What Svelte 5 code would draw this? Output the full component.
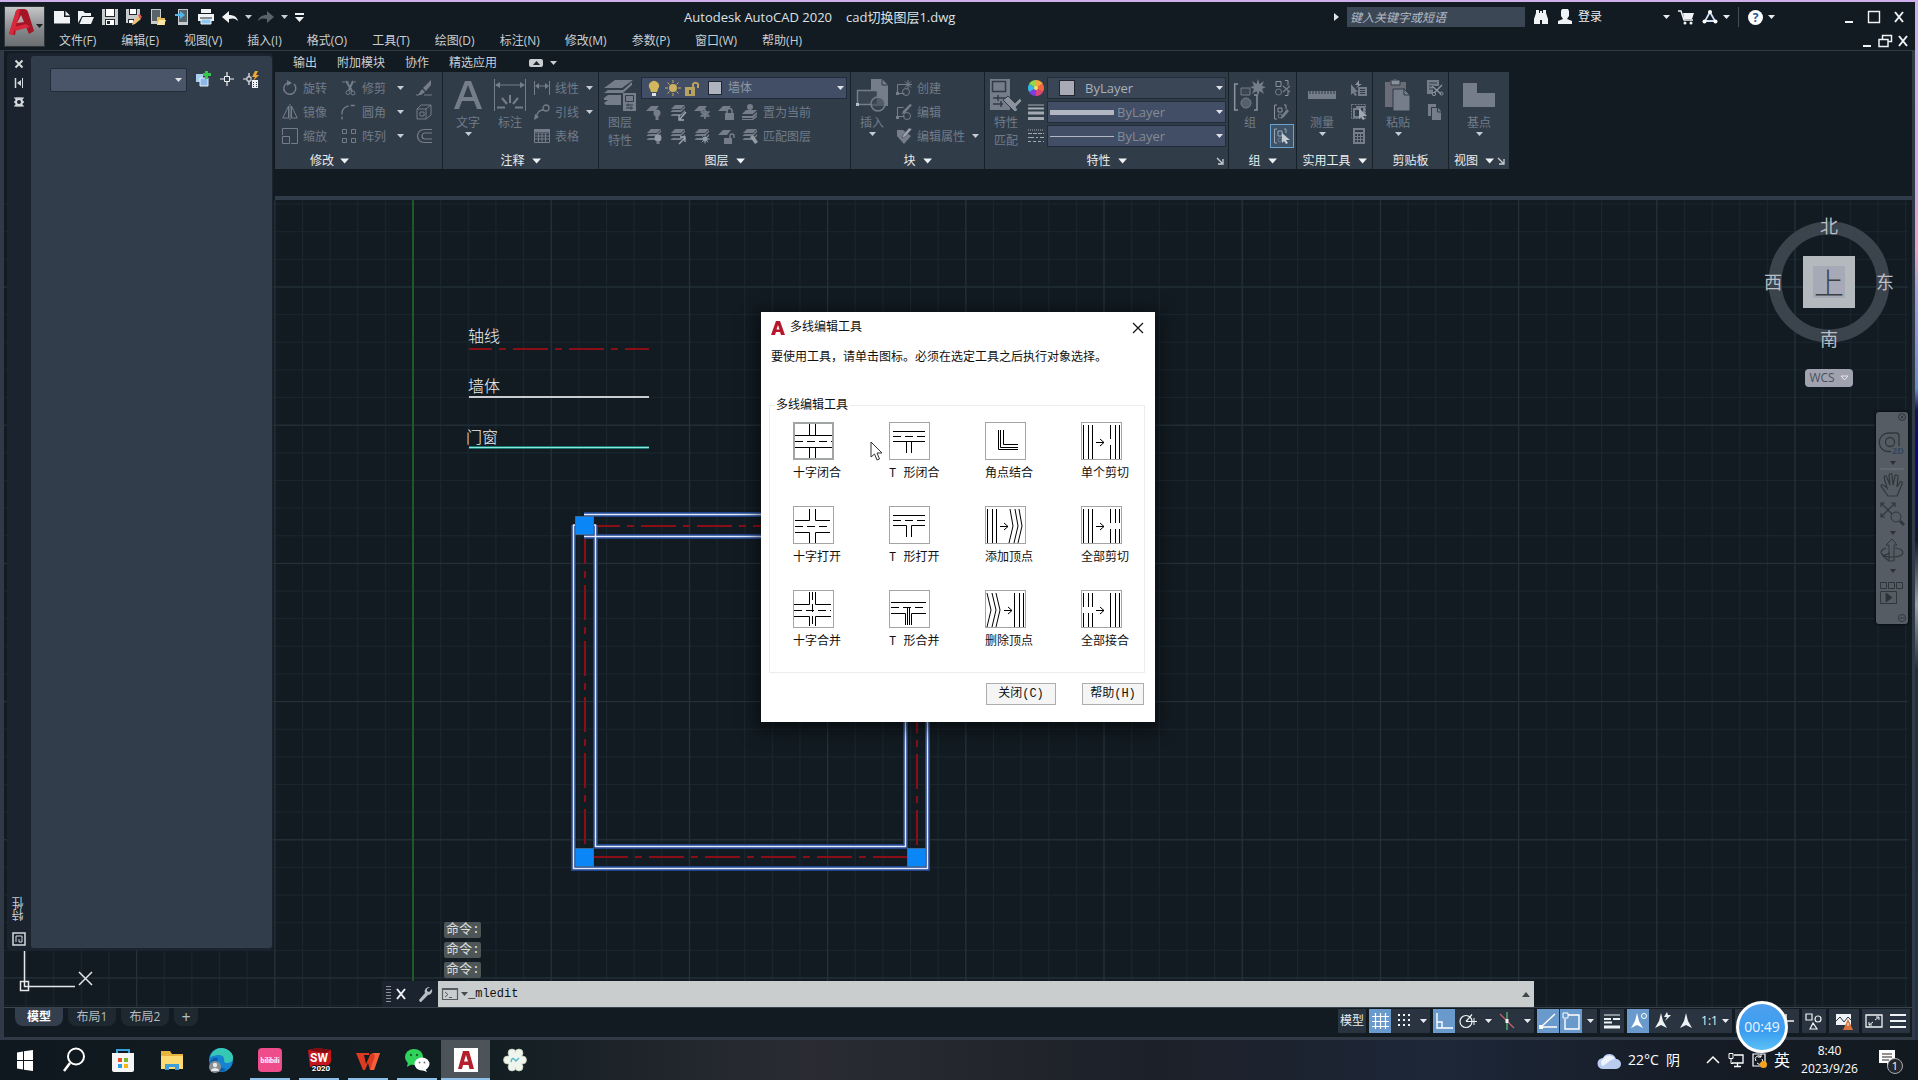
<script>
  const g = '#757d8a';
  const w = '#f0f3f5';
  const stackSmall = `<path d="M5 1h10l-4 4H1zM1 7l2-1h8l4-4v2l-4 4H1zM1 11l2-1h8l4-4v2l-4 4H1z" fill="${g}"/>`;
  const sheet = `<path d="M5 2h8l-4 5H0z" fill="${g}"/>`;
  const icons = {
    rotate: `<path d="M5 3a6 6 0 1 0 7 1" fill="none" stroke="${g}" stroke-width="1.4"/><path d="M5 0v6l5-3z" fill="${g}"/>`,
    trim: `<path d="M1 2h3M6 2h2M13 2h2" stroke="${g}"/><path d="M5 1l6 10M12 1L8 10" stroke="${g}" stroke-width="2"/><circle cx="7" cy="12.500" r="2" fill="none" stroke="${g}"/><circle cx="12" cy="13" r="2" fill="none" stroke="${g}"/>`,
    erase: `<path d="M15 0L7 8l3 3 5-6zM6 9l3 3-4 3H2z" fill="${g}"/><path d="M0 15h3M8 15h8" stroke="${g}"/>`,
    mirror: `<path d="M6.500 2v12H.8zM9.500 2v12h5.700z" fill="none" stroke="${g}"/><path d="M8 0v16" stroke="${g}"/>`,
    fillet: `<path d="M1 15.500v-6C1 5 5 1.500 10 1.500h5.500" fill="none" stroke="${g}" stroke-width="1.300" stroke-dasharray="3 2 12 2 4"/>`,
    box: `<path d="M1 5h9v10H1zM1 5l4-4h10v10l-5 4M10 5l5-4M4 8h4v4H4z" fill="none" stroke="${g}"/>`,
    scale: `<path d="M.5 7V.5h15v15H9M.5 8.500h7v7h-7z" fill="none" stroke="${g}"/>`,
    array: `<path d="M1.500 1.500h4v4h-4zM10.500 1.500h4v4h-4zM1.500 10.500h4v4h-4zM10.500 10.500h4v4h-4z" fill="none" stroke="${g}"/>`,
    offset: `<path d="M16 1.500H8a6 6 0 0 0 0 13h8M16 5H9a3 3 0 0 0 0 6h7" fill="none" stroke="${g}" stroke-width="1.2"/>`,
    linear: `<path d="M.5 1v14M15.500 1v14M2 6h12" stroke="${g}"/><path d="M1 6l4-3v6zM15 6l-4-3v6z" fill="${g}"/>`,
    leader: `<path d="M2 14C3 8 5 6 9 6" fill="none" stroke="${g}" stroke-width="1.3"/><path d="M0 16l1-6 4 3z" fill="${g}"/><circle cx="12" cy="4" r="3" fill="none" stroke="${g}" stroke-width="1.3"/>`,
    table: `<path d="M.5 1.500h15v13H.5zM.5 5h15M.5 8h15M.5 11h15M4.500 5v9M8 5v9M11.500 5v9" fill="none" stroke="${g}"/><path d="M0 1h16v3H0z" fill="${g}"/>`,
    bigA: `<path d="M2 30L13 2h6l11 28h-5l-3-8H10l-3 8zM11.500 18h9L16 6z" fill="${g}" fill-rule="evenodd"/>`,
    bigDim: `<path d="M.5 0v32M31.500 0v32M2 6h28" stroke="${g}"/><path d="M1 6l5-3v6zM31 6l-5-3v6z" fill="${g}"/><path d="M16 16v8M8 19l5 6M24 19l-5 6M3 28.500h8M29 28.500h-8" stroke="${g}" stroke-width="2"/>`,
    bigLayers: `<path d="M11 1h18L18 9H0zM0 14l4-3h15l9-8v3l-9 8zM0 19l4-3h13v5H0zM0 24l4-3h13v5H2z" fill="${g}"/><path d="M19 14h13v18H19z" fill="${g}"/><path d="M21.500 16.500h8v6h-8zM22 26h7M22 29h7M24 24.500v3M27 27.500v3" fill="none" stroke="#313b49"/>`,
    layOff: sheet + `<circle cx="11" cy="9" r="3.500" fill="${g}"/><path d="M9.500 12h3v4h-3z" fill="${g}"/>`,
    layIso: stackSmall + `<path d="M16 8l-6 7M9 11v5h5" fill="none" stroke="#a3aab5" stroke-width="1.3"/>`,
    layFreeze: sheet + `<path d="M11 5v10M6.500 7.500l9 5M15.500 7.500l-9 5" stroke="${g}" stroke-width="1.6"/><circle cx="11" cy="10" r="3" fill="none" stroke="${g}"/>`,
    layLock: sheet + `<path d="M7 9h9v7H7z" fill="${g}"/><path d="M9 9V7a2.500 2.500 0 0 1 5 0v2" fill="none" stroke="${g}" stroke-width="1.5"/>`,
    layCur: `<circle cx="8" cy="3" r="3" fill="${g}"/><path d="M4 6h11l-4 4H0zM0 12h10l5-4v2l-4 4H0z M0 16v-1h10l5-4v2l-4 3z" fill="${g}"/>`,
    layOn: stackSmall + `<circle cx="12" cy="10" r="3.500" fill="#929aa5"/><path d="M10.500 13h3v3h-3z" fill="${g}"/>`,
    layUniso: stackSmall + `<path d="M9 16l6-6M10 9h5v5" fill="none" stroke="#a3aab5" stroke-width="1.3"/>`,
    layThaw: stackSmall + `<circle cx="11" cy="11" r="2.500" fill="#929aa5"/><path d="M11 6v10M6 11h10M7.500 7.500l7 7M14.500 7.500l-7 7" stroke="#929aa5" stroke-dasharray="1.500 5 3"/>`,
    layUnlock: sheet + `<path d="M6 10h8v6H6z" fill="${g}"/><path d="M12 10V8a2 2 0 0 1 4 0v2" fill="none" stroke="${g}" stroke-width="1.5"/>`,
    layMatch: stackSmall + `<path d="M8 9l3-2 5 7-3 2z" fill="#929aa5"/>`,
    bulb: `<path d="M4 9a5 5 0 1 1 8 0l-1 3H5z" fill="#d3b75c"/><path d="M6 13h4v3H6z" fill="#dfe1e4"/>`,
    sun: `<circle cx="8" cy="8" r="4" fill="#cbb064"/><path d="M8 0v3M8 13v3M0 8h3M13 8h3M2.500 2.500l2 2M11.500 11.500l2 2M13.500 2.500l-2 2M4.500 11.500l-2 2" stroke="#cbb064"/>`,
    unlock: `<path d="M1 7h10v9H1z" fill="#b9a25f"/><path d="M9 7V4a3 3 0 0 1 5 0v4" fill="none" stroke="#b9a25f" stroke-width="2"/><path d="M5 10h2v4H5z" fill="#3f4c63"/>`,
    bigInsert: `<path d="M15 0h11l6 6v21H15z" fill="${g}"/><path d="M26 0v6h6" fill="none" stroke="#313b49"/><path d="M1.500 11.500h20v14h-20z" fill="#3a4552" stroke="${g}" stroke-width="1.500"/><circle cx="22" cy="25" r="7" fill="#3a4552" fill-opacity=".6" stroke="${g}" stroke-width="1.500"/><path d="M0 24h3v3H0z" fill="#b9bec6"/>`,
    create: `<path d="M1.500 4.500h7M1.500 4.500v9h7" fill="none" stroke="${g}"/><circle cx="10" cy="12" r="3.500" fill="none" stroke="${g}"/><path d="M12 0v9M8 4.500h8M9 1.500l6 6M15 1.500l-6 6" stroke="${g}"/><path d="M0 12h3v3H0z" fill="${g}"/>`,
    edit: `<path d="M1.500 3.500h6M1.500 3.500v9h7" fill="none" stroke="${g}"/><circle cx="11" cy="12" r="3.500" fill="none" stroke="${g}"/><path d="M16 1l-7 8-3 1 1-3 7-7z" fill="${g}"/><path d="M0 12h3v3H0z" fill="${g}"/>`,
    editAttr: `<path d="M1 2h6l8 6-7 8-7-8z" fill="${g}"/><path d="M16 1l-7 8-3 1 1-3 6-7z" fill="#a1a7b0" stroke="#313b49" stroke-width=".5"/>`,
    bigMatch: `<path d="M0 0h20v31H0z" fill="${g}"/><path d="M2.500 2.500h13v10h-13z" fill="none" stroke="#313b49" stroke-width="1.500"/><path d="M3 19h13M3 25h10M8 16v6M11 22v6" stroke="#313b49" stroke-width="1.500"/><path d="M13 21l5-4 7 7 5-5 2 3-6 6 2 3-3 2z" fill="#8b929c" stroke="#313b49"/>`,
    wheel: `<path d="M8 8V0a8 8 0 0 1 6.900 4z" fill="#f7a23b"/><path d="M8 8l6.900-4a8 8 0 0 1 0 8z" fill="#f2653f"/><path d="M8 8l6.900 4A8 8 0 0 1 8 16z" fill="#e0457b"/><path d="M8 8v8a8 8 0 0 1-6.900-4z" fill="#7b3fe0"/><path d="M8 8l-6.900 4a8 8 0 0 1 0-8z" fill="#38b6e8"/><path d="M8 8L1.100 4A8 8 0 0 1 8 0z" fill="#8fd94f"/><circle cx="8" cy="8" r="2" fill="#f6e06a"/>`,
    weights: `<path d="M0 1h16" stroke="#a3aab3"/><path d="M0 4.500h16" stroke="#a3aab3" stroke-width="2"/><path d="M0 9h16" stroke="#a3aab3" stroke-width="3"/><path d="M0 14.500h16" stroke="#a3aab3" stroke-width="3"/>`,
    types: `<path d="M0 2h16" stroke="#a3aab3" stroke-dasharray="1 1"/><path d="M0 5.500h16" stroke="#a3aab3" stroke-dasharray="4 1"/><path d="M0 9.500h16" stroke="#a3aab3" stroke-dasharray="6 2 2 2"/><path d="M0 13.500h16" stroke="#a3aab3" stroke-dasharray="3 2"/>`,
    bigGroup: `<path d="M4 5H.7v26H4M20 16h3v15h-3" fill="none" stroke="#8b929c" stroke-width="1.500"/><path d="M7 9h9v7H7z" fill="#3a4552" stroke="${g}"/><circle cx="12" cy="24" r="5" fill="#56606d" stroke="${g}"/><path d="M24 0l1.500 5L30 2l-2 5 4 1-4 2 2 5-4.500-3L24 17l-1.500-5L18 15l2-5-4-2 4-1-2-5 4.500 3z" fill="${g}"/>`,
    ungroup: `<path d="M2 1.500h5v5H2zM11 .5h3v5M14 11v4.500h-3" fill="none" stroke="#8b929c"/><circle cx="4.500" cy="12" r="3" fill="none" stroke="${g}"/><path d="M9 6l7 6M16 6l-7 6" stroke="${g}" stroke-width="1.300"/>`,
    groupEdit: `<path d="M3 1H.5v14H3M10 1h2v4M4 4h4v4H4z" fill="none" stroke="#8b929c"/><circle cx="6" cy="12" r="2" fill="none" stroke="${g}"/><path d="M15 7l-5 6-3 2 1-4 5-6z" fill="${g}"/>`,
    groupSel: `<path d="M3 1H.5v14H3M10 1h2v4M4 3h4v5H4z" fill="none" stroke="#9aa7b4"/><circle cx="6" cy="12" r="2" fill="none" stroke="${g}"/><path d="M8 5v10l2-2 2 3 2-1-2-3h4z" fill="#c3cbd3"/>`,
    bigRuler: `<path d="M2 12h28v8H2z" fill="${g}"/><path d="M4 12v3M7 12v3M10 12v3M13 12v3M16 12v3M19 12v3M22 12v3M25 12v3M28 12v3" stroke="#313b49"/>`,
    quickSel: `<path d="M0 4v11l2-2 2 3 2-1-2-3h3z" fill="${g}"/><path d="M7 7h9v9H7z" fill="${g}"/><path d="M9 9.500h5M9 11.500h5M9 13.500h5" stroke="#313b49"/><path d="M8 0L4 5h3l-2 3 6-4H8z" fill="#8b929c"/>`,
    selAll: `<path d="M.5.5h14v14H.5z" fill="none" stroke="${g}" stroke-dasharray="2 1"/><path d="M3 5h6v8H3z M5 3h8v7" fill="none" stroke="${g}" stroke-width="2"/><path d="M8 4v11l2-2 2 3 2-1-2-3h4z" fill="#a1a7b0"/>`,
    calc: `<path d="M2 0h12v16H2z" fill="${g}"/><path d="M4 2h8v2H4zM4 6h2v2H4zM7 6h2v2H7zM10 6h2v2h-2zM4 9h2v2H4zM7 9h2v2H7zM10 9h2v2h-2zM4 12h2v2H4zM7 12h2v2H7zM10 12h2v2h-2z" fill="#313b49"/>`,
    bigPaste: `<path d="M3 3h5V1h3V0h4v1h3v2h6v25H3z" fill="#6a6d75"/><path d="M9 1h9v5H9z" fill="#8b929c" stroke="#313b49"/><path d="M11 10h11l6 6v16H11z" fill="${g}" stroke="#313b49"/><path d="M22 9v7h7" fill="none" stroke="#313b49"/>`,
    cut: `<path d="M0 0h12v6H6v8H0z" fill="${g}"/><path d="M2 3h8M2 6h5M2 9h4" stroke="#313b49"/><path d="M5 6l9 8M15 5l-8 8" stroke="#8b929c" stroke-width="1.500"/><circle cx="7" cy="14" r="1.700" fill="none" stroke="#8b929c"/><circle cx="14.500" cy="13.500" r="1.500" fill="none" stroke="#8b929c"/>`,
    copy: `<path d="M1 0h8v3H4v9H1z" fill="${g}"/><path d="M5 4h6l3 3v9H5z" fill="${g}"/><path d="M10.500 4v4H14" fill="none" stroke="#313b49"/>`,
    bigBase: `<path d="M0 4h14v10h18v14H0z" fill="${g}"/>`,
    newFile: `<path d="M0 2h10v6h6v6.500H0z" fill="${w}"/><path d="M11.500 2v4.500H16z" fill="${w}"/>`,
    open: `<path d="M0 14V2h5l2 2h6v3H4z" fill="${w}"/><path d="M4.500 8H16l-3 7H1.500z" fill="${w}"/>`,
    save: `<path d="M0 0h16v16H0z" fill="#c8cccd"/><path d="M3 0h10v8H3z" fill="#20272d"/><path d="M4 0h8v7H4z" fill="#fff"/><path d="M3 10h10v6H3z" fill="#20272d"/><path d="M4 11h8v5H4z" fill="#fff"/><path d="M5 12h3v3H5z" fill="#20272d"/>`,
    saveAs: `<path d="M0 0h14v8l-6 6H0z" fill="#c8cccd"/><path d="M3 0h8v6H3z" fill="#20272d"/><path d="M4 0h6v5H4z" fill="#fff"/><path d="M2 10h6v5H2z" fill="#20272d"/><path d="M3 11h4v3H3z" fill="#fff"/><path d="M12 7l3 3-6 5-3 1 1-4z" fill="#efc07a"/><path d="M12 6l2-1 2 3-2 2z" fill="#e05a50"/>`,
    cloudOpen: `<path d="M1 0h10v15H1z" fill="#c8cccd"/><path d="M2 1h8v11H2z" fill="#59636b"/><path d="M7 8h3l1 1h4v7H7z" fill="#e8bd55"/><path d="M9 11h7l-2 5H7z" fill="#fbe6a5"/>`,
    cloudSave: `<path d="M4 0h10v16H4z" fill="#c8cccd"/><path d="M5 1h8v12H5z" fill="#59636b"/><path d="M1 5h5V2l5 4-5 4V7H1z" fill="#4fb6ee"/>`,
    print: `<path d="M3 0h10v4H3z" fill="${w}"/><path d="M0 5h16v7H0z" fill="${w}"/><path d="M3 10h10v5H3z" fill="#8cc8f2" stroke="${w}"/><path d="M2 9h12" stroke="#20272d"/>`,
    undo: `<path d="M0 8l7-6v4c5 0 8 2 9 6-3-3-5-3-9-2v4z" fill="${w}"/>`,
    redo: `<path d="M16 8L9 2v4c-5 0-8 2-9 6 3-3 5-3 9-2v4z" fill="#59636b"/>`,
    custom: `<path d="M1 2h9v2H1zM1 6h9l-4.500 5z" fill="${w}"/>`,
    binoc: `<path d="M3 1h3v3h1V2h2v2h1V1h3v3l2 6v5H9v-4H7v4H1v-5l2-6z" fill="${w}"/>`,
    user: `<path d="M5 0h6l1 2v5l-2 3 5 2v3H1v-3l5-2-2-3V2z" fill="${w}"/>`,
    cart: `<path d="M0 2h3l3 9h9" fill="none" stroke="${w}" stroke-width="1.500"/><path d="M5 4h11l-2 6H6z" fill="${w}"/><circle cx="7" cy="14" r="1.500" fill="${w}"/><circle cx="13" cy="14" r="1.500" fill="${w}"/>`,
    share: `<path d="M8 3L3 12h10z" fill="none" stroke="#cfe0f4" stroke-width="1.800"/><circle cx="8" cy="3" r="2" fill="#fff"/><circle cx="2.500" cy="12.500" r="2" fill="#fff"/><circle cx="13.500" cy="12.500" r="2" fill="#fff"/>`,
    min: `<path d="M4 12h8v2H4z" fill="${w}"/>`,
    max: `<path d="M2.500 2.500h11v11h-11z" fill="none" stroke="${w}" stroke-width="1.400"/>`,
    restore: `<path d="M5.500 6V2.500h9v6H11M2 6.500h9v7H2z" fill="none" stroke="${w}" stroke-width="1.500"/>`,
    close: `<path d="M4 3l8 10M12 3L4 13" stroke="${w}" stroke-width="2"/>`,
    railClose: `<path d="M4.500 4.500l7 7M11.500 4.500l-7 7" stroke="#d5dade" stroke-width="2"/>`,
    pin: `<path d="M4.500 3v10" stroke="#d5dade" stroke-width="1.500"/><path d="M10 5v6L6 8z" fill="#d5dade"/><path d="M11.500 3v10" stroke="#d5dade"/>`,
    cog: `<circle cx="8" cy="8" r="3" fill="none" stroke="#d5dade" stroke-width="2"/><path d="M8 3v2M8 11v2M3 8h2M11 8h2M3.500 3.500l2 2M10.500 10.500l2 2M12.500 3.500l-2 2M5.500 10.500l-2 2M6 3v2M10 3v2M6 11v2M10 11v2" stroke="#d5dade" stroke-width="1.300"/>`,
    propBox: `<path d="M2 2h12v12H2z" fill="none" stroke="#d5dade" stroke-width="1.500"/><path d="M5 5v6M5 5h6v6H8V8" fill="none" stroke="#d5dade"/>`,
    pickAdd: `<path d="M1 3h7v8H1z" fill="#a9cdf0"/><path d="M5 7h8v8H5z" fill="#8fb8e6" stroke="#e4effb"/><path d="M10 0h3v2h3v3h-3v3h-3V5H8V2h2z" fill="#37c54a"/>`,
    pick: `<path d="M8 1v5M8 10v5M1 8h5M10 8h5" stroke="${w}" stroke-width="1.200"/><path d="M5.500 5.500h5v5h-5z" fill="none" stroke="${w}"/>`,
    pickFilter: `<path d="M6 2v4M6 10v4M0 8h4" stroke="${w}" stroke-width="1.200"/><path d="M4 6h4v4H4z" fill="none" stroke="${w}"/><path d="M12 0L9 6h3l-2 4 6-6h-3l2-4z" fill="#f0a830"/><path d="M9 9h6v8H9z" fill="${w}"/><path d="M10 11.500h1M13 11.500h1M10 13.500h1M13 13.500h1M10 15.500h1M13 15.500h1" stroke="#313d4b"/>`,
    launcher: `<path d="M1 1l5 5M7 2v5H2" fill="none" stroke="#c8cfd6" stroke-width="1.300"/>`,
    grid: `<path d="M4.500 1v16M9.500 1v16M14.500 1v16M1 4.500h17M1 9.500h17M1 14.500h17" stroke="#fff" stroke-width="1.200"/>`,
    snap: `<path d="M3 3h12M3 8h12M3 13h12" stroke="${w}" stroke-width="2" stroke-dasharray="2 3"/>`,
    ortho: `<path d="M2 1v15h16M2 10h5v6" fill="none" stroke="#fff" stroke-width="1.400"/>`,
    polar: `<circle cx="7" cy="9.500" r="6" fill="none" stroke="${w}" stroke-width="1.200"/><path d="M7 9.500h11M7 9.500l6-7" stroke="${w}" stroke-width="1.200"/><path d="M15 6v7" stroke="${w}"/>`,
    iso: `<path d="M2 2l14 14" stroke="#d0606a" stroke-width="1.200"/><path d="M9 0v7M9 11v7" stroke="#58c878" stroke-width="1.200"/><path d="M7.500 7h3v4h-3z" fill="${w}"/>`,
    otrack: `<path d="M16 2L2 15h16" fill="none" stroke="#fff" stroke-width="1.400"/><path d="M0 13h4v4H0z" fill="#fff"/>`,
    osnap: `<path d="M6 3h11v14H3V7" fill="none" stroke="#fff" stroke-width="1.400"/><path d="M1 1h5v5H1z" fill="#6a9acb" stroke="#fff"/>`,
    lwt: `<path d="M1 3h16" stroke="${w}"/><path d="M1 7h7M10 7h7" stroke="${w}" stroke-width="2"/><path d="M1 10.500h8" stroke="${w}" stroke-width="2"/><path d="M1 15h16" stroke="${w}" stroke-width="3"/>`,
    anno1: `<path d="M8 1l2 8 4 7-6-3-6 3 4-7z" fill="#fff"/><circle cx="15" cy="4" r="2.500" fill="none" stroke="#fff"/>`,
    anno2: `<path d="M8 1l2 8 4 7-6-3-6 3 4-7z" fill="${w}"/><path d="M14 0l-3 5h3l-2 4 6-6h-3z" fill="${w}"/>`,
    anno3: `<path d="M9 1l2 8 4 7-6-3-6 3 4-7z" fill="${w}"/>`,
    plus: `<path d="M0 9h12M4 2v14" stroke="${w}" stroke-width="1.500"/>`,
    shapes: `<path d="M1 2h6v6H1zM5 17l3-6 4 6z" fill="none" stroke="${w}" stroke-width="1.200"/><circle cx="13" cy="7" r="3" fill="none" stroke="${w}" stroke-width="1.200"/>`,
    perf: `<path d="M1 2h15v11H1z" fill="${w}"/><path d="M1 9l4-4 4 5 4-5 3 3" fill="none" stroke="#2b3644"/><path d="M13 7l5 11H8z" fill="#d9713c"/><path d="M13 11v3" stroke="#fff"/>`,
    full: `<path d="M1 3h16v12H1z" fill="none" stroke="${w}" stroke-width="1.300"/><path d="M10 8l4-3M11 5h3v3M8 10l-4 3M4 10v3h3" fill="none" stroke="${w}"/>`,
    burger: `<path d="M1 3h16M1 9h16M1 15h16" stroke="${w}" stroke-width="2"/>`,
    win: `<path d="M4 4.500l6-1V12H4zM11 3.300l9-1.300v10h-9zM4 13h6v8.500l-6-1zM11 13h9v10l-9-1.300z" fill="#fff"/>`,
    search: `<circle cx="14" cy="8.500" r="8" fill="none" stroke="#fff" stroke-width="2"/><path d="M8 15l-6 8" stroke="#fff" stroke-width="2.500"/>`,
    store: `<path d="M6 6V2h12v4" fill="none" stroke="#35a0dc" stroke-width="2"/><path d="M1 5h22v17a2 2 0 0 1-2 2H3a2 2 0 0 1-2-2z" fill="#f5f5f5"/><path d="M7 10h4v4H7z" fill="#e8542c"/><path d="M13 10h4v4h-4z" fill="#7ab82b"/><path d="M7 16h4v4H7z" fill="#2aa0e8"/><path d="M13 16h4v4h-4z" fill="#f4b614"/>`,
    folder: `<path d="M1 3h9l2 3h11v15H1z" fill="#e7b440"/><path d="M1 8h22v13H1z" fill="#fbdb72"/><path d="M5 22v-6h14v6h-4v-3H9v3z" fill="#3d9fd8"/>`,
    edge: `<circle cx="12" cy="12" r="12" fill="#1583cf"/><path d="M1 9C3 3 8 0 12 0c8 0 13 6 12 11-1 5-9 5-9 2 1-3-1-6-5-6-4 0-8 2-9 2z" fill="#37c8b4"/><path d="M9 10c-2 5 1 10 8 11-6 5-14 2-16-5 0-4 3-7 8-6z" fill="#0d5ba8"/><circle cx="6" cy="19" r="6" fill="#8a8f94"/><circle cx="6" cy="17" r="2.200" fill="#e8e8e8"/><path d="M2 23c0-4 8-4 8 0z" fill="#e8e8e8"/>`,
    bili: `<rect width="24" height="24" rx="4" fill="#ef4c8c"/><text x="12" y="15" font-size="7" font-weight="700" text-anchor="middle" fill="#fff" font-family="Roboto">bilibili</text>`,
    sw: `<path d="M1 2l9-2 14 2v12l-4 5H3z" fill="#c4161c"/><path d="M1 2l9-2 14 2-6 3z" fill="#7c0d12"/><text x="12" y="14" font-size="12" font-weight="700" text-anchor="middle" fill="#fff" font-family="Roboto">SW</text><text x="14" y="23" font-size="8" font-weight="700" text-anchor="middle" fill="#fff" stroke="#111" stroke-width="2" paint-order="stroke" font-family="Roboto">2020</text>`,
    wps: `<path d="M0 5h13v2H8l2 9 4-9h-1l4-2h7l-6 17h-4l-2-7-3 7H7z" fill="#dd3a22"/><path d="M17 5h7l-6 17h-4l5-14z" fill="#f0603a"/>`,
    wechat: `<ellipse cx="9" cy="9" rx="9" ry="8" fill="#2fd35c"/><path d="M3 14l-1 5 5-3z" fill="#2fd35c"/><ellipse cx="17" cy="16" rx="7.500" ry="6.500" fill="#fff"/><path d="M20 20l2 4-5-2z" fill="#fff"/><circle cx="6" cy="7" r="1.200" fill="#14682e"/><circle cx="12" cy="7" r="1.200" fill="#14682e"/><circle cx="14.500" cy="14.500" r="1" fill="#777"/><circle cx="19.500" cy="14.500" r="1" fill="#777"/>`,
    acad: `<path d="M0 0h24v24H0z" fill="#fff"/><path d="M4 21L9 3h6l5 18h-4.500l-1-4H9l-1 4zM10 13.500h4L12 7z" fill="#b3202c" fill-rule="evenodd"/>`,
    flower: `<g fill="#f2f4ea" stroke="#b8cfb4" stroke-width=".7"><circle cx="9" cy="5" r="4"/><circle cx="16" cy="5" r="4"/><circle cx="19.500" cy="12" r="4"/><circle cx="16" cy="19" r="4"/><circle cx="9" cy="19" r="4"/><circle cx="4.500" cy="12" r="4"/></g><circle cx="12" cy="12" r="7.500" fill="#eef4ee"/><path d="M8 14q1-5 3-3t2 2 3-3" fill="none" stroke="#58b4c4" stroke-width="1.400"/>`,
    cloud: `<path d="M6 21a5.500 5.500 0 0 1 0-11 7 7 0 0 1 13 1 5 5 0 0 1 0 10z" fill="#b9ccf0"/><path d="M6 18a4 4 0 0 1 0-7 7 7 0 0 1 12 0c-4 0-6 3-12 7z" fill="#eef3fd"/>`,
    up: `<path d="M2 11l6-6 6 6" fill="none" stroke="#fff" stroke-width="1.500"/>`,
    net: `<path d="M6 3h9v8H4M9.500 11v4M6 14.500h7" fill="none" stroke="#fff" stroke-width="1.300"/><path d="M1 1.500h4v5H1zM3 7v4.500h2" fill="none" stroke="#fff"/>`,
    refresh: `<path d="M2 2h12v12H2z" fill="none" stroke="#fff" stroke-width="1.200"/><path d="M5 9a3 3 0 0 1 5-4M10 2v3H7M11 7a3 3 0 0 1-5 4" fill="none" stroke="#fff"/><circle cx="12.500" cy="12.500" r="3.500" fill="#f5a21c"/>`,
    wrench: `<path d="M15 3l-3 3-2-1v-2l3-2a4.500 4.500 0 0 0-5 6l-6 7 1 2h1l7-7a4.500 4.500 0 0 0 4-6z" fill="#b8bec4"/>`,
    prompt: `<path d="M.5 2.500h15v11H.5z" fill="none" stroke="#555d63" stroke-width="1.200"/><path d="M0 3h16" stroke="#555d63" stroke-width="2"/><path d="M3 6l3 2.500L3 11M7 11.500h3" fill="none" stroke="#555d63"/>`
  };

  const menus = ['文件(F)', '编辑(E)', '视图(V)', '插入(I)', '格式(O)', '工具(T)', '绘图(D)', '标注(N)', '修改(M)', '参数(P)', '窗口(W)', '帮助(H)'];
  const tabs = ['输出', '附加模块', '协作', '精选应用'];
  const quick = [['newFile', '新建'], ['open', '打开'], ['save', '保存'], ['saveAs', '另存为'], ['cloudOpen', '从移动设备打开'], ['cloudSave', '保存到移动设备'], ['print', '打印']];
  const layerRows = [
    [['layOff', '关闭'], ['layIso', '隔离'], ['layFreeze', '冻结'], ['layLock', '锁定'], ['layCur', '置为当前', true]],
    [['layOn', '打开'], ['layUniso', '取消隔离'], ['layThaw', '解冻'], ['layUnlock', '解锁'], ['layMatch', '匹配图层', true]]
  ];

  const left3 = 'M2.500 3v34M7.500 3v34M11.500 3v34';
  const right3 = 'M29.500 3v34M34.500 3v34M38.500 3v34';
  const cutR = 'M29.500 3v14M34.500 3v14M38.500 3v14M29.500 23v14M34.500 23v14M38.500 23v14';
  const cutL = 'M2.500 3v14M7.500 3v14M11.500 3v14M2.500 23v14M7.500 23v14M11.500 23v14';
  const arrow = 'M15 20.500h8M19 17l4 3.500-4 3.500';
  const tools = [
    { t: '十字闭合', d: 'M16.500 2v11M22.500 2v11M16.500 26v10M22.500 26v10M2 13.500h37M2 25.500h37', h: 'M2 19.500h37' },
    { t: 'T 形闭合', d: 'M4 9.500h32M4 19.500h32M17.500 20v11M22.500 20v11', h: 'M4 14.500h32' },
    { t: '角点结合', d: 'M13.500 8v19.500H33M15.500 8v17.500H33M18.500 8v14.500H33' },
    { t: '单个剪切', d: left3 + arrow + 'M29.500 3v14M29.500 23v14M34.500 3v34M38.500 3v34' },
    { t: '十字打开', d: 'M2 14.500h14.500V3M22.500 3v11.500H37M2 26.500h14.500V37M22.500 37V26.500H37', h: 'M2 20.500h35' },
    { t: 'T 形打开', d: 'M4 9.500h32M4 19.500h13.500V31M36 19.500H22.500V31', h: 'M4 14.500h32' },
    { t: '添加顶点', d: left3 + arrow + 'M25 3l3 17-4 17M30 3l3 17-4 17M34 3l3 17-4 17' },
    { t: '全部剪切', d: left3 + arrow + cutR },
    { t: '十字合并', d: 'M1 14.500h15.500V2M22.500 2v12.500H38M1 26.500h15.500V36M22.500 36V26.500H38', h: 'M1 20.500h37M19.500 2v34' },
    { t: 'T 形合并', d: 'M2 12.500h35M2 23.500h14.500V35M37 23.500H22.500V35M18.500 18v17M20.500 18v17', h: 'M2 17.500h35' },
    { t: '删除顶点', d: 'M2 3l4 17-4 17M7 3l4 17-4 17M11 3l4 17-4 17M19 20.500h8M23 17l4 3.500-4 3.500' + right3 },
    { t: '全部接合', d: cutL + arrow + right3 }
  ];
  const apps = [['win', '开始'], ['search', '搜索'], ['store', 'Microsoft Store'], ['folder', '文件资源管理器'], ['edge', 'Edge'], ['bili', 'bilibili', 'open'], ['sw', 'SolidWorks', 'open'], ['wps', 'WPS', 'open'], ['wechat', '微信', 'open'], ['acad', 'AutoCAD', 'active'], ['flower', '相册']];
</script>

{#snippet icon(name, size = 16)}
  <svg class="icon" width={size} height={size} viewBox="0 0 {size} {size}" aria-hidden="true">{@html icons[name]}</svg>
{/snippet}

{#snippet down()}
  <svg class="down" width="8" height="6" viewBox="0 0 8 6" aria-hidden="true"><path d="M1 1h7L4.500 5z" fill="currentColor" /></svg>
{/snippet}

{#snippet small(name, label, drop)}
  <button class="small">{@render icon(name)}<span>{label}</span>{#if drop}{@render down()}{/if}</button>
{/snippet}

{#snippet big(name, lines, drop)}
  <button class="big">
    {@render icon(name, 32)}
    {#each lines as line}<span>{line}</span>{/each}
    {#if drop}{@render down()}{/if}
  </button>
{/snippet}

{#snippet title(text, drop = true)}
  <div class="panel-title"><span>{text}</span>{#if drop}{@render down()}{/if}</div>
{/snippet}

{#snippet launcher()}
  <button class="launcher" aria-label="打开设置">{@render icon('launcher', 8)}</button>
{/snippet}

<div class="desktop">
  <header>
    <button class="logo" aria-label="应用程序菜单">
      <svg width="39" height="39" viewBox="0 0 39 39" aria-hidden="true">
        <path d="M4 27L11 4q1-2 4-2h4q3 0 4 3l6 19-5 3-3-7-10 2-1 6z" fill="#a51427" />
        <path d="M4 27L11 4q1-2 4-2l-1 7-6 19z" fill="#d9283b" />
        <path d="M12 16l4-8 3 7z" fill="#b7a9ab" />
        <path d="M9 20l12-3 4 3-15 4z" fill="#d9283b" />
        <path d="M31 17h7l-3.500 4z" fill="#222" />
      </svg>
    </button>
    <div class="bars">
      <div class="titlebar">
        <div class="quick">
          {#each quick as [n, l]}<button aria-label={l}>{@render icon(n)}</button>{/each}
          <button aria-label="放弃">{@render icon('undo')}</button>
          <button class="tiny" aria-label="放弃列表">{@render down()}</button>
          <button aria-label="重做">{@render icon('redo')}</button>
          <button class="tiny" aria-label="重做列表">{@render down()}</button>
          <button class="tiny custom" aria-label="自定义">{@render icon('custom', 12)}</button>
        </div>
        <h1><span>Autodesk AutoCAD 2020</span><span>cad切换图层1.dwg</span></h1>
        <div class="account">
          <span class="play"></span>
          <input aria-label="搜索" placeholder="键入关键字或短语" />
          <button aria-label="查找">{@render icon('binoc')}</button>
          <button class="login">{@render icon('user')}<span>登录</span>{@render down()}</button>
          <button aria-label="购物车">{@render icon('cart')}</button>
          <button class="pair" aria-label="应用">{@render icon('share')}{@render down()}</button>
          <i></i>
          <button class="pair help" aria-label="帮助"><b>?</b>{@render down()}</button>
        </div>
        <div class="controls">
          <button aria-label="最小化">{@render icon('min')}</button>
          <button aria-label="最大化">{@render icon('max')}</button>
          <button aria-label="关闭">{@render icon('close')}</button>
        </div>
      </div>
      <div class="menurow">
        <nav>{#each menus as m}<button>{m}</button>{/each}</nav>
        <div class="controls inner">
          <button aria-label="最小化图形">{@render icon('min')}</button>
          <button aria-label="还原图形">{@render icon('restore')}</button>
          <button aria-label="关闭图形">{@render icon('close')}</button>
        </div>
      </div>
    </div>
  </header>

  <main>
    <div class="workspace">
      <svg class="drawing" width="100%" height="100%" aria-hidden="true">
        <defs>
          <pattern id="minor" width="27.640" height="27.640" patternUnits="userSpaceOnUse" x="412.500" y="286.500">
            <path d="M.5 0v27.640M0 .5h27.640" stroke="#1a262e" />
          </pattern>
          <pattern id="major" width="138.200" height="138.200" patternUnits="userSpaceOnUse" x="412.500" y="286.500">
            <path d="M.5 0v138.200M0 .5h138.200" stroke="#25323b" />
          </pattern>
        </defs>
        <g transform="translate(-4 -51)">
          <rect y="200" width="100%" height="100%" fill="url(#minor)" />
          <rect y="200" width="100%" height="100%" fill="url(#major)" />
          <path d="M413 200v807" stroke="#1d5a2a" stroke-width="2" />
          <g class="legend">
            <text x="468" y="342">轴线</text>
            <text x="468" y="392">墙体</text>
            <text x="466" y="443">门窗</text>
          </g>
          <path d="M469 349h180" class="axis" stroke-dashoffset="12" />
          <path d="M469 397h180" stroke="#c9cdcf" stroke-width="2" />
          <path d="M469 447.500h180" stroke="#1c7a74" stroke-width="3" />
          <path d="M469 447.500h180" stroke="#8fe4dc" />
          <path d="M585 526h332v331h-332z" class="axis" />
          <g fill="none" stroke="#22468c" stroke-width="5">
            <path d="M584 514.500h343.500v354H573.500V525M584 536.500h321.500v310H595.500V525" />
          </g>
          <g fill="none" stroke="#e4ebff" stroke-width="1.500">
            <path d="M584 514.500h343.500v354H573.500V525h2M584 536.500h321.500v310H595.500V525h-2" />
          </g>
          <g fill="#0a86f7" stroke="#3b6b9c">
            <path d="M575.500 516.500h18v18h-18zM575.500 848.500h18v18h-18zM907.500 848.500h18v18h-18z" />
          </g>
          <path d="M24.500 951v30M30 986.500h45M20.500 981.500h8v9h-8zM79 972l13 13M92 972l-13 13M24.500 981v5.500H30" fill="none" stroke="#e4e8ea" stroke-width="1.500" />
        </g>
      </svg>

      <aside>
        <div class="rail">
          <button aria-label="关闭选项板">{@render icon('railClose')}</button>
          <button aria-label="自动隐藏">{@render icon('pin')}</button>
          <button aria-label="特性设置">{@render icon('cog')}</button>
          <span class="vertical">特性</span>
          {@render icon('propBox')}
        </div>
        <div class="palette">
          <span class="combo"><select aria-label="选择对象"><option></option></select>{@render down()}</span>
          <button aria-label="切换 PICKADD">{@render icon('pickAdd')}</button>
          <button aria-label="选择对象">{@render icon('pick')}</button>
          <button aria-label="快速选择">{@render icon('pickFilter')}</button>
        </div>
      </aside>

      <div class="content">
        <div class="tabs">
          {#each tabs as t}<button>{t}</button>{/each}
          <button class="collapse" aria-label="最小化功能区"><em><svg width="7" height="4" viewBox="0 0 7 4"><path d="M0 4l3.500-4L7 4z" fill="#222" /></svg></em>{@render down()}</button>
        </div>
        <div class="ribbon">
          <section class="modify">
            <div class="body">
              {@render small('rotate', '旋转')}{@render small('trim', '修剪', true)}{@render small('erase', '')}
              {@render small('mirror', '镜像')}{@render small('fillet', '圆角', true)}{@render small('box', '')}
              {@render small('scale', '缩放')}{@render small('array', '阵列', true)}{@render small('offset', '')}
            </div>
            {@render title('修改')}
          </section>
          <section class="annotate">
            <div class="body">
              {@render big('bigA', ['文字'], true)}
              {@render big('bigDim', ['标注'])}
              <div class="col">{@render small('linear', '线性', true)}{@render small('leader', '引线', true)}{@render small('table', '表格')}</div>
            </div>
            {@render title('注释')}
          </section>
          <section class="layers">
            <div class="body">
              {@render big('bigLayers', ['图层', '特性'])}
              <div class="col">
                <span class="combo">
                  {@render icon('bulb')}{@render icon('sun')}{@render icon('unlock')}<i class="swatch"></i>
                  <select aria-label="图层"><option>墙体</option></select>{@render down()}
                </span>
                {#each layerRows as row}
                  <div class="iconrow">
                    {#each row as [n, l, show]}<button aria-label={l}>{@render icon(n)}{#if show}<span>{l}</span>{/if}</button>{/each}
                  </div>
                {/each}
              </div>
            </div>
            {@render title('图层')}
          </section>
          <section class="block">
            <div class="body">
              {@render big('bigInsert', ['插入'], true)}
              <div class="col">{@render small('create', '创建')}{@render small('edit', '编辑')}{@render small('editAttr', '编辑属性', true)}</div>
            </div>
            {@render title('块')}
          </section>
          <section class="props">
            <div class="body">
              {@render big('bigMatch', ['特性', '匹配'])}
              <div class="col">
                <div class="prop">{@render icon('wheel')}<span class="combo bright"><i class="swatch"></i><select aria-label="颜色"><option>ByLayer</option></select>{@render down()}</span></div>
                <div class="prop">{@render icon('weights')}<span class="combo"><i class="bar thick"></i><select aria-label="线宽"><option>ByLayer</option></select>{@render down()}</span></div>
                <div class="prop">{@render icon('types')}<span class="combo"><i class="bar"></i><select aria-label="线型"><option>ByLayer</option></select>{@render down()}</span></div>
              </div>
            </div>
            {@render title('特性')}
            {@render launcher()}
          </section>
          <section class="group">
            <div class="body">
              {@render big('bigGroup', ['组'])}
              <div class="col side">
                <button aria-label="解除编组">{@render icon('ungroup')}</button>
                <button aria-label="组编辑">{@render icon('groupEdit')}</button>
                <button class="on" aria-label="启用组选择">{@render icon('groupSel')}</button>
              </div>
            </div>
            {@render title('组')}
          </section>
          <section class="utils">
            <div class="body">
              {@render big('bigRuler', ['测量'], true)}
              <div class="col side">
                <button aria-label="快速选择">{@render icon('quickSel')}</button>
                <button aria-label="全部选择">{@render icon('selAll')}</button>
                <button aria-label="计算器">{@render icon('calc')}</button>
              </div>
            </div>
            {@render title('实用工具')}
          </section>
          <section class="clip">
            <div class="body">
              {@render big('bigPaste', ['粘贴'], true)}
              <div class="col side">
                <button aria-label="剪切">{@render icon('cut')}</button>
                <button aria-label="复制">{@render icon('copy')}</button>
              </div>
            </div>
            {@render title('剪贴板', false)}
          </section>
          <section class="view">
            <div class="body">{@render big('bigBase', ['基点'], true)}</div>
            {@render title('视图')}
            {@render launcher()}
          </section>
        </div>
        <div class="band"></div>
      </div>

      <div class="cube">
        <svg width="116" height="124" viewBox="0 0 116 124">
          <circle cx="58" cy="62" r="54" fill="none" stroke="#3b434d" stroke-width="13" />
          <path d="M32 36h52v52H32z" fill="#b3b9bc" />
          <path d="M42 46h32v32H42z" fill="#a7aab6" />
          <text x="58" y="74" font-size="30" fill="#3c4045" font-weight="300">上</text>
          <g font-size="18" fill="#b9bfc3">
            <text x="58" y="13">北</text>
            <text x="58" y="126">南</text>
            <text x="2" y="69">西</text>
            <text x="114" y="69">东</text>
          </g>
        </svg>
        <button class="wcs">WCS <svg width="9" height="6" viewBox="0 0 9 6"><path d="M1 1h7L4.500 5z" fill="none" stroke="#e4e6ea" /></svg></button>
      </div>

      <div class="navbar">
        <svg width="32" height="212" viewBox="0 0 32 212" fill="none" stroke="#30373c" aria-hidden="true">
          <circle cx="26" cy="5" r="3.500" /><path d="M24.500 3.500l3 3M27.500 3.500l-3 3" />
          <path d="M15 39.500h-2a9 9 0 0 1-1-18.500h8q3 0 3 3v10" stroke-width="1.300" /><circle cx="14" cy="30" r="4.500" stroke-width="1.300" />
          <text x="16" y="42" font-size="9" font-weight="700" fill="#33475c" stroke="none">2D</text>
          <path d="M14 49h6l-3 4zM14 119h6l-3 4zM14 157h6l-3 4z" fill="#2b3136" stroke="none" />
          <path d="M4 57h24" stroke="#6d757c" />
          <path d="M12 84l-7-10c0-2 2-2 6 2l-3-11c1-2 3-1 3 1l3 7-1-10c1-2 3-2 3 0l1 10 2-9c1-2 3-1 3 1l-1 10 3-5c2-1 3 0 2 2l-5 12z" stroke-width="1.200" />
          <path d="M5 91l14 14M19 91L5 105M5 95v-4h4M15 91h4v4M5 101v4h4" stroke-width="1.200" /><circle cx="20" cy="105" r="5" fill="#555c64" /><path d="M24 109l4 4" stroke-width="3" />
          <path d="M13 149v-16h-3l6-6 5 6h-3v16z" /><path d="M10 136c-9 3-5 9 6 9 14 0 14-8 3-9M14 141l-7 3 6 5" stroke-width="1.200" />
          <path d="M4.500 170.500h6v6h-6zM12.500 170.500h6v6h-6zM20.500 170.500h6v6h-6zM4.500 179.500h16v12h-16z" /><path d="M10 181v9l6-4.500z" fill="#2b3136" />
          <circle cx="26" cy="206" r="3.500" /><path d="M24 206h4" />
        </svg>
      </div>

      <div class="history"><span>命令:</span><span>命令:</span><span>命令:</span></div>
      <div class="command">
        <span class="grip"></span>
        <button class="dismiss" aria-label="关闭命令行">{@render icon('close')}</button>
        <button class="custom" aria-label="自定义命令行">{@render icon('wrench')}</button>
        <div class="entry">
          {@render icon('prompt')}{@render down()}
          <input aria-label="命令" value="_mledit" />
          <span class="upmark"></span>
        </div>
      </div>
    </div>

    <footer>
      <div class="sheets">
        <button class="current">模型</button><button>布局1</button><button>布局2</button><button class="add" aria-label="新建布局">+</button>
      </div>
      <div class="status">
        <div><button class="model">模型</button></div>
        <div class="s2"><button class="sel" aria-label="栅格">{@render icon('grid', 18)}</button><button aria-label="捕捉">{@render icon('snap', 18)}</button><button class="drop" aria-label="捕捉选项">{@render down()}</button></div>
        <div class="s3"><button class="sel" aria-label="正交">{@render icon('ortho', 18)}</button><button aria-label="极轴">{@render icon('polar', 18)}</button><button class="drop" aria-label="极轴选项">{@render down()}</button><button aria-label="等轴测">{@render icon('iso', 18)}</button><button class="drop" aria-label="等轴测选项">{@render down()}</button></div>
        <div><button class="sel" aria-label="追踪">{@render icon('otrack', 18)}</button><button class="sel" aria-label="对象捕捉">{@render icon('osnap', 18)}</button><button class="drop" aria-label="对象捕捉选项">{@render down()}</button></div>
        <div><button aria-label="线宽">{@render icon('lwt', 18)}</button></div>
        <div><button class="sel" aria-label="注释可见性">{@render icon('anno1', 18)}</button><button aria-label="自动缩放">{@render icon('anno2', 18)}</button><button aria-label="注释比例">{@render icon('anno3', 18)}</button><button class="ratio">1:1{@render down()}</button></div>
        <div class="ws"><button aria-label="注释监视器">{@render icon('plus', 18)}</button></div>
        <div><button aria-label="隔离对象">{@render icon('shapes', 18)}</button></div>
        <div class="pf"><button aria-label="硬件加速">{@render icon('perf', 18)}</button></div>
        <div><button aria-label="全屏显示">{@render icon('full', 18)}</button><button aria-label="自定义">{@render icon('burger', 18)}</button></div>
      </div>
    </footer>
  </main>

  <div class="taskbar">
    {#each apps as [n, l, state]}<button class={state} aria-label={l}>{@render icon(n, 24)}</button>{/each}
    <div class="tray">
      {@render icon('cloud', 24)}<span class="weather">22°C&nbsp; 阴</span>
      <button aria-label="显示隐藏的图标">{@render icon('up')}</button>
      <button aria-label="网络">{@render icon('net')}</button>
      <button aria-label="更新">{@render icon('refresh')}</button>
      <button class="ime">英</button>
      <button class="clock"><span>8:40</span><span>2023/9/26</span></button>
      <button class="notice" aria-label="通知">
        <svg width="26" height="28" viewBox="0 0 26 28"><path d="M1 4h16v13h-4l-4 4v-4H1z" fill="#fff" /><path d="M4 8h10M4 11h10M4 14h7" stroke="#222" /><circle cx="17" cy="20" r="7.500" fill="#25272b" stroke="#a9adb2" /><text x="17" y="24" text-anchor="middle" font-size="11" fill="#fff">1</text></svg>
      </button>
    </div>
  </div>

  <div class="timer">00:49</div>

  <div class="dialog" role="dialog" aria-labelledby="dialog-title">
    <div class="dialog-head">
      <svg width="14" height="14" viewBox="0 0 14 14" aria-hidden="true"><path d="M0 14L5 0h4l5 14h-4l-1-3H5l-1 3zM5.500 8.500h3L7 4z" fill="#b5182a" fill-rule="evenodd" /></svg>
      <h2 id="dialog-title">多线编辑工具</h2>
      <button aria-label="关闭"><svg width="12" height="12" viewBox="0 0 12 12"><path d="M1 1l10 10M11 1L1 11" stroke="#111" stroke-width="1.200" /></svg></button>
    </div>
    <p>要使用工具，请单击图标。必须在选定工具之后执行对象选择。</p>
    <fieldset>
      <legend>多线编辑工具</legend>
      {#each tools as tool, i}
        <button class="tool" class:chosen={i === 0}>
          <svg width="41" height="38" viewBox="0 0 41 38" fill="none" stroke="#000" aria-hidden="true">
            <path d={tool.d} />{#if tool.h}<path d={tool.h} stroke-dasharray="8 4" />{/if}
            <rect class="frame" x=".5" y=".5" width="40" height="37" />
          </svg>
          <span>{tool.t}</span>
        </button>
      {/each}
    </fieldset>
    <div class="actions"><button class="wide">关闭(C)</button><button>帮助(H)</button></div>
    <svg class="pointer" width="13" height="20" viewBox="0 0 13 20" aria-hidden="true"><path d="M1 1v15l3.500-3 2.500 6 2.500-1L7 12h5z" fill="#fff" stroke="#333" /></svg>
  </div>
</div>

<style>
  :global(body) {
    margin: 0;
    background: #121b22;
  }
  .desktop {
    position: relative;
    display: flex;
    flex-direction: column;
    box-sizing: border-box;
    min-height: 100vh;
    padding-top: 2px;
    overflow: hidden;
    font: 12px/18px 'Open Sans', 'Noto Sans CJK SC', sans-serif;
    color: #c9ced3;
    background: linear-gradient(#cfb0ea 0, #d0a8e0 18%, #f0a0c8 23%, #a0a0d8 27%, #6888c8 36%, #101850 38%, #0a0a80 42%, #101830 50%, #90a0a8 56%, #203038 62%, #1d3550 100%);
  }
  button {
    padding: 0;
    border: 0;
    background: none;
    color: inherit;
    font: inherit;
    display: flex;
    align-items: center;
    justify-content: center;
    white-space: nowrap;
  }
  input, select { font: inherit; color: inherit; border: 0; min-width: 0; }
  .icon, .down { flex: none; overflow: visible; }
  header {
    display: flex;
    gap: 5px;
    height: 48px;
    margin-right: 3px;
    background: #121b22;
  }
  .logo {
    flex: none;
    align-items: flex-start;
    width: 41px;
    height: 41px;
    margin: 4px 0 0 4px;
    border: 1px solid #30363a;
    background: linear-gradient(#c4c6c8, #85888b 60%, #6b6e71);
  }
  .bars { flex: 1; display: flex; flex-direction: column; }
  .titlebar { display: flex; align-items: center; height: 30px; }
  .quick { display: flex; align-items: center; flex: 0 0 34%; }
  .quick button { width: 24px; height: 20px; }
  .quick .tiny { width: 12px; }
  .quick .custom { width: 20px; }
  h1 { display: flex; gap: 14px; margin: 0; font-size: 13px; font-weight: 400; color: #dde1e4; white-space: nowrap; }
  .account { flex: 1; display: flex; align-items: center; justify-content: flex-end; gap: 8px; color: #e8ebee; }
  .play { border: 4px solid transparent; border-left: 5px solid #dfe3e6; border-right: 0; }
  .account input {
    width: 178px;
    height: 20px;
    box-sizing: border-box;
    padding: 0 3px;
    background: #3c4756;
    font-style: italic;
  }
  .account input::placeholder { color: #b4bbc4; opacity: 1; }
  .login { gap: 5px; }
  .login :global(.down) { margin-left: 55px; }
  .pair { gap: 4px; }
  .account i { width: 1px; height: 20px; background: #444e57; }
  .help b { width: 15px; height: 15px; border-radius: 8px; background: #fff; color: #2456a8; line-height: 15px; }
  .account .help { padding-left: 1px; }
  .controls { display: flex; gap: 9px; width: 140px; box-sizing: border-box; padding-right: 8px; justify-content: flex-end; }
  .inner { gap: 2px; padding-right: 4px; }
  .menurow { display: flex; justify-content: space-between; align-items: center; height: 18px; }
  nav { display: flex; gap: 25px; padding-left: 9px; }
  main {
    flex: 1;
    display: flex;
    flex-direction: column;
    margin-right: 3px;
    border: solid #2f3a46;
    border-width: 1px 3px 3px 4px;
    background: #121b22;
  }
  .workspace { position: relative; flex: 1; display: flex; overflow: hidden; }
  .drawing { position: absolute; inset: 0; }
  .legend { font-size: 16px; font-weight: 300; fill: #eef1f2; }
  .axis { fill: none; stroke: #8a0e16; stroke-width: 2; stroke-dasharray: 35 7 7 7; }
  aside {
    position: relative;
    display: flex;
    width: 266px;
    flex: none;
    box-sizing: border-box;
    margin: 2px 2px 57px 3px;
    padding: 3px 1px 2px 0;
    border-radius: 4px;
    background: #1b242e;
  }
  .rail { flex: none; width: 24px; display: flex; flex-direction: column; align-items: center; gap: 3px; padding-bottom: 1px; }
  .rail button { height: 16px; }
  .vertical { margin-top: auto; margin-bottom: 7px; writing-mode: vertical-rl; transform: rotate(180deg); }
  .palette { flex: 1; min-width: 0; display: flex; align-items: flex-start; gap: 8px; padding: 12px 0 12px 19px; border-radius: 3px; background: #323d4b; }
  .palette button { height: 22px; }
  .combo { display: flex; align-items: center; box-sizing: border-box; height: 22px; border: 1px solid #222c38; background: #414e65; }
  .combo select { flex: 1; appearance: none; background: none; padding: 0; height: 20px; }
  .combo :global(.down) { margin: 0 2px 0 2px; color: #dfe3e7; }
  .palette .combo { width: 137px; height: 24px; background: #4a5569; border-radius: 2px; }
  .palette .combo :global(.down) { margin-right: 4px; }
  .content { position: relative; flex: 1; display: flex; flex-direction: column; align-self: flex-start; background: #121b22; }
  .tabs { display: flex; gap: 20px; box-sizing: border-box; height: 21px; padding: 2px 0 0 18px; align-items: center; }
  .collapse { gap: 6px; margin-left: 12px; }
  .collapse em { display: flex; align-items: center; justify-content: center; width: 14px; height: 8px; border-radius: 2px; background: #c9ced3; }
  .ribbon { display: flex; height: 97px; margin-bottom: 27px; }
  .band { height: 4px; background: #303b49; }
  section { position: relative; display: flex; flex-direction: column; box-sizing: border-box; border-right: 1px solid #17212a; background: #313c49; color: #707b88; }
  .body { display: flex; flex: 1; box-sizing: border-box; padding-top: 4px; }
  .body span { padding-top: 1px; }
  .body .combo { padding-top: 0; }
  .panel-title { display: flex; align-items: center; justify-content: center; gap: 6px; height: 16px; color: #e8ecef; }
  section :global(.down) { color: #c6ccd2; }
  .panel-title :global(.down) { width: 10px; height: 8px; color: #f0f3f5; }
  .small { gap: 5px; height: 24px; justify-content: flex-start; }
  .small :global(.down) { margin-left: 1px; }
  .big { flex-direction: column; justify-content: flex-start; width: 42px; padding-top: 3px; height: 76px; }
  .big :global(.icon) { margin-bottom: 2px; }
  .big span { height: 17px; }
  .col { display: flex; flex-direction: column; }
  .modify { width: 168px; }
  .modify .body { display: grid; grid-template-columns: 59px 75px 16px; grid-auto-rows: 24px; padding-left: 7px; }
  .modify :global(.down) { margin-left: 5px; }
  .modify > :global(.panel-title) { justify-content: flex-start; padding-left: 35px; gap: 0; }
  .annotate { width: 156px; }
  .annotate .body { padding-left: 4px; }
  .annotate .col { padding-left: 3px; }
  .layers { width: 252px; }
  .layers .big { width: 42px; }
  .layers .col { flex: 1; padding-right: 3px; }
  .layers .combo { margin: 1px 0; gap: 3px; padding-left: 4px; color: #8e97a6; }
  .swatch { width: 12px; height: 12px; border: 1px solid #20262d; background: #b0b3c0; }
  .layers .swatch { margin: 0 3px 0 5px; }
  .iconrow { display: flex; height: 24px; padding-left: 1px; }
  .iconrow button { min-width: 24px; gap: 5px; }
  .iconrow button:last-child { margin-left: 4px; }
  .block { width: 134px; }
  .block .body, .props .body, .group .body { padding-left: 5px; }
  .block .big, .props .big { width: 32px; }
  .block .col { padding-left: 8px; }
  .props { width: 244px; }
  .props .col { flex: 1; padding: 0 2px 0 6px; }
  .prop { display: flex; align-items: center; gap: 3px; height: 24px; }
  .prop .combo { flex: 1; font-size: 13px; color: #818b9a; }
  .bright.combo { background: #3a4656; color: #a9b1ba; }
  .prop .swatch { margin: 0 10px 0 11px; width: 14px; height: 14px; background: #a8abb6; }
  .bar { width: 64px; height: 1px; margin: 0 3px 0 2px; background: #b1b8c1; }
  .bar.thick { height: 5px; }
  .group { width: 68px; }
  .group .big { width: 32px; }
  .side button { width: 24px; height: 24px; }
  .group .side { padding-left: 4px; }
  .side .on { box-sizing: border-box; border: 1px solid #6ba3d0; background: #3e5268; }
  .utils, .clip { width: 76px; }
  .utils .big { width: 50px; }
  .clip .big { width: 50px; }
  .view { width: 60px; border-right: 0; }
  .view .big { width: 60px; }
  .launcher { position: absolute; right: 4px; bottom: 4px; }
  .view > :global(.panel-title) { justify-content: flex-start; padding-left: 5px; }
  .cube { position: absolute; right: 25px; top: 169px; display: flex; flex-direction: column; align-items: center; gap: 25px; }
  .cube svg { overflow: visible; }
  .cube text { text-anchor: middle; }
  .wcs { gap: 5px; width: 48px; height: 18px; border-radius: 4px; background: #a0a2b0; color: #4b505c; }
  .navbar { position: absolute; right: 4px; top: 361px; height: 212px; border-radius: 3px; background: #555c64; box-shadow: 0 0 2px 1px #0a0f13; }
  .history { position: absolute; left: 440px; bottom: 29px; display: flex; flex-direction: column; gap: 4px; font-family: 'Liberation Mono', 'Noto Sans CJK SC', monospace; font-size: 13px; }
  .history span { height: 16px; line-height: 16px; padding: 0 1px 0 2px; border-radius: 2px; background: #4e5556; color: #d8dcdc; }
  .command { position: absolute; left: 378px; right: 378px; bottom: 0; height: 26px; display: flex; align-items: center; background: #1b242e; }
  .grip { width: 5px; height: 16px; margin-left: 4px; background: repeating-linear-gradient(#8b9299 0 1px, #1b242e 1px 3px); }
  .command .dismiss { width: 20px; }
  .command .custom { width: 27px; }
  .entry { flex: 1; display: flex; align-items: center; height: 26px; box-sizing: border-box; padding: 0 4px; background: #c9cdcd; color: #444b50; }
  .entry input { flex: 1; padding: 0; background: none; color: #111; font: 12px 'Liberation Mono', monospace; }
  .entry :global(.down) { margin-left: 2px; }
  .upmark { border: 4px solid transparent; border-bottom: 5px solid #3f474c; border-top: 0; }
  footer { display: flex; justify-content: space-between; height: 29px; border-top: 1px solid #3a434c; }
  .sheets { display: flex; gap: 5px; padding-left: 11px; align-items: flex-start; }
  .sheets button { height: 18px; width: 48px; border-radius: 0 0 8px 8px; background: #1d2831; color: #b7bec4; }
  .sheets .current { background: #343f4d; color: #fff; font-weight: 700; }
  .sheets .add { width: 24px; font-size: 16px; }
  .status { display: flex; gap: 3px; padding: 1px 2px 0 0; }
  .status div { display: flex; height: 24px; background: #293440; color: #e8ecef; }
  .status button { width: 24px; height: 24px; }
  .status .sel { width: 22px; margin-right: 1px; background: #6a9acb; }
  .status .drop { width: 14px; }
  .status .model { width: 28px; }
  .s3 .drop { margin-left: 1px; }
  .status .ratio { width: 34px; gap: 3px; }
  .status .ws { width: 64px; justify-content: flex-end; }
  .status .ws button { width: 16px; }
  .status .pf { padding: 0 3px; }
  .taskbar { display: flex; height: 40px; padding: 0; background: linear-gradient(90deg, #0f181e, #121d22 25%, #2b2c33 42%, #1c2028 60%, #1d2738 75%, #151b24 90%, #121a20); }
  .taskbar > button { width: 49px; box-sizing: border-box; }
  .taskbar > .open { background: linear-gradient(#8fc0ea, #8fc0ea) center bottom / 40px 2px no-repeat; }
  .taskbar > .active { background: linear-gradient(#8fc0ea, #8fc0ea) center bottom / 100% 2px no-repeat #4d5459; }
  .tray { margin-left: auto; display: flex; align-items: center; gap: 7px; padding-right: 14px; color: #fff; font-size: 14px; }
  .weather { margin-right: 18px; }
  .ime { font-size: 16px; }
  .clock { flex-direction: column; font-size: 12px; width: 65px; }
  .notice { margin-left: 9px; }
  .timer {
    position: absolute;
    right: 130px;
    bottom: 27px;
    width: 46px;
    height: 46px;
    border: 3px solid #fff;
    border-radius: 50%;
    background: linear-gradient(#4f9fee, #3a9ef0 60%, #5cc0f6);
    color: #e8f4ff;
    font-size: 14px;
    line-height: 46px;
    text-align: center;
  }
  .dialog {
    position: absolute;
    left: 761px;
    top: 312px;
    width: 394px;
    box-sizing: border-box;
    padding: 0 11px 17px 8px;
    background: #fff;
    color: #111;
    line-height: 16px;
    font-family: 'Liberation Mono', 'Noto Sans CJK SC', monospace;
    box-shadow: 0 4px 16px 4px rgb(0 0 0 / 50%);
  }
  .dialog-head { display: flex; align-items: center; height: 31px; padding: 0 0 0 2px; }
  h2 { flex: 1; margin: 0 0 0 5px; font: inherit; }
  .dialog p { margin: 7px 2px 30px; }
  fieldset { display: grid; grid-template-columns: repeat(4, 96px); grid-auto-rows: 84px; box-sizing: border-box; width: 376px; height: 277px; min-width: 0; margin: 0; padding: 8px 0 0 23px; border: 1px solid #ececec; }
  legend { margin-left: -18px; padding: 2px 2px 0 1px; }
  .tool { flex-direction: column; align-items: flex-start; justify-content: flex-start; gap: 6px; }
  .frame { stroke: #a2a5a5; }
  .chosen .frame { stroke-width: 3; }
  .actions { display: flex; justify-content: flex-end; gap: 26px; padding-top: 10px; }
  .actions button { box-sizing: border-box; width: 62px; height: 22px; border: 1px solid #adadad; background: #f5f5f5; }
  .actions .wide { width: 70px; }
  .pointer { position: absolute; left: 109px; top: 129px; }
</style>
